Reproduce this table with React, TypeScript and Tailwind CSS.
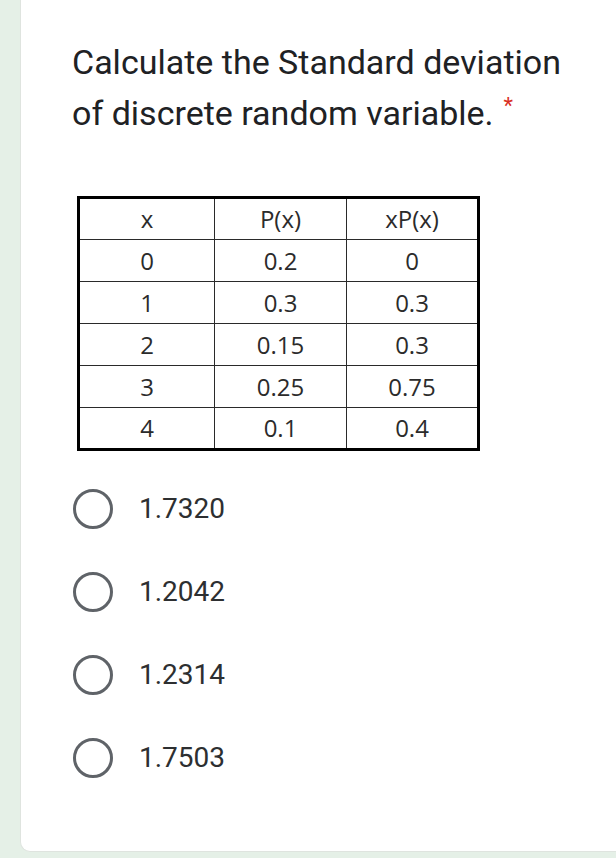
import React from "react";

const rows: [string, string, string][] = [
  ["0", "0.2", "0"],
  ["1", "0.3", "0.3"],
  ["2", "0.15", "0.3"],
  ["3", "0.25", "0.75"],
  ["4", "0.1", "0.4"],
];

const options = ["1.7320", "1.2042", "1.2314", "1.7503"];

export default function App() {
  return (
    <div className="w-[616px] h-[858px] bg-[#e5f0e7] pl-[20px] pb-[6px] overflow-hidden">
      <div className="h-full bg-white rounded-bl-[10px] border-l border-b border-[#dfe4df] pl-[51px] pt-[37px]">
        <div
          className="text-[34px] leading-[51px] text-[#202124]"
          style={{ fontFamily: "Roboto, 'Noto Sans', sans-serif" }}
        >
          <div>Calculate the Standard deviation</div>
          <div>
            of discrete random variable.
            <span className="text-[22px] text-[#d93025] align-top relative top-[-8px] ml-[10px]">*</span>
          </div>
        </div>

        <table
          className="mt-[57px] ml-[5px] border-collapse border-[3px] border-black text-[#2b2b2b]"
          style={{ fontFamily: "'Open Sans', 'Noto Sans', sans-serif" }}
        >
          <tbody>
            <tr className="h-[42px]">
              <td className="w-[136px] border-[1.5px] border-[#2a2a2a] text-center text-[24px] p-0">x</td>
              <td className="w-[132px] border-[1.5px] border-[#2a2a2a] text-center text-[24px] p-0">P(x)</td>
              <td className="w-[132px] border-[1.5px] border-[#2a2a2a] text-center text-[24px] p-0">xP(x)</td>
            </tr>
            {rows.map((r, i) => (
              <tr key={i} className="h-[42px]">
                {r.map((c, j) => (
                  <td key={j} className="border-[1.5px] border-[#2a2a2a] text-center text-[24px] p-0">
                    {c}
                  </td>
                ))}
              </tr>
            ))}
          </tbody>
        </table>

        <div className="mt-[38px] ml-[1px] flex flex-col gap-[44px]">
          {options.map((o) => (
            <div key={o} className="flex items-center h-[39px]">
              <div className="w-[40px] h-[40px] rounded-full border-[3px] border-[#5f6368] shrink-0" />
              <div
                className="ml-[26px] text-[28px] text-[#2d2f31]"
                style={{ fontFamily: "Roboto, 'Noto Sans', sans-serif" }}
              >
                {o}
              </div>
            </div>
          ))}
        </div>
      </div>
    </div>
  );
}
